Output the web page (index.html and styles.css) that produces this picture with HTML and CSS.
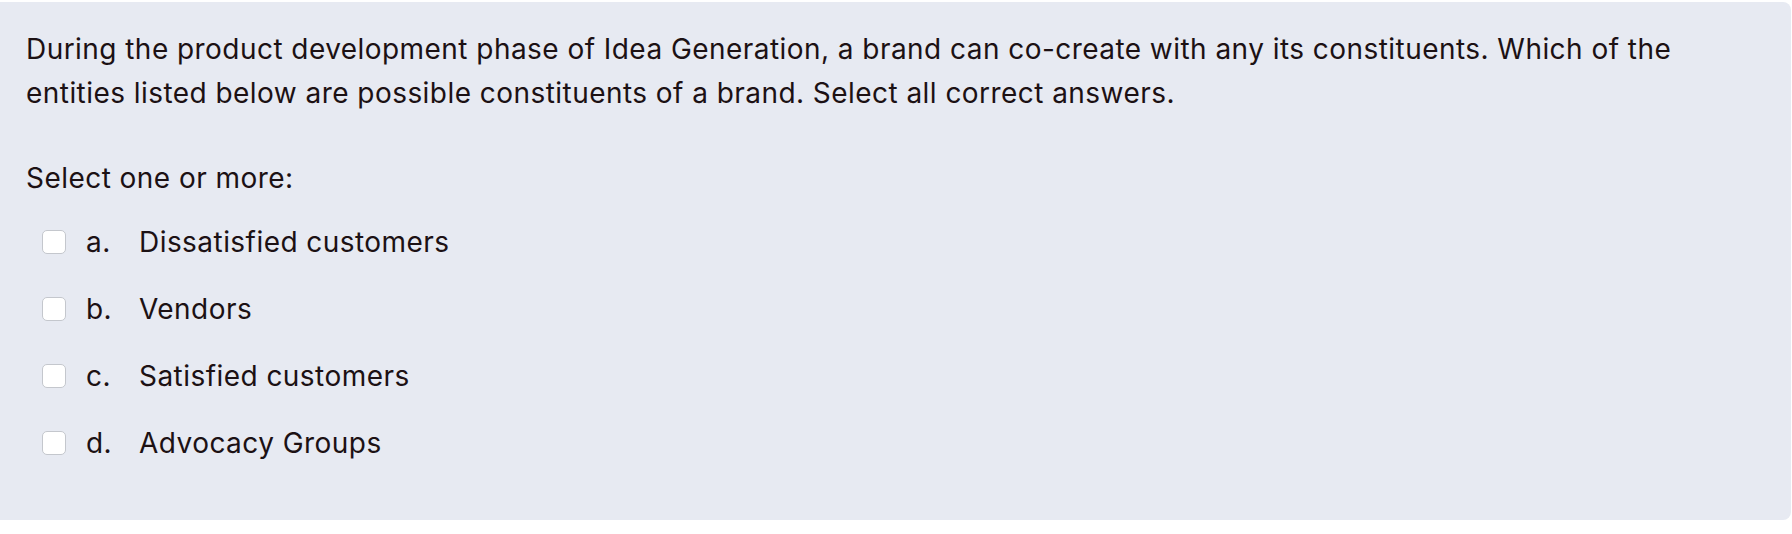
FILE: index.html
```html
<!DOCTYPE html>
<html lang="en">
<head>
<meta charset="utf-8">
<title>Question</title>
<link rel="stylesheet" href="styles.css">
</head>
<body>
<div class="formulation">
  <div class="qtext">During the product development phase of Idea Generation, a brand can co-create with any its constituents. Which of the entities listed below are possible constituents of a brand. Select all correct answers.</div>
  <div class="ablock">
    <div class="prompt">Select one or more:</div>
    <div class="answer">
      <div class="option"><span class="box"></span><span class="num">a.</span><span class="label">Dissatisfied customers</span></div>
      <div class="option"><span class="box"></span><span class="num">b.</span><span class="label">Vendors</span></div>
      <div class="option"><span class="box"></span><span class="num">c.</span><span class="label">Satisfied customers</span></div>
      <div class="option"><span class="box"></span><span class="num">d.</span><span class="label">Advocacy Groups</span></div>
    </div>
  </div>
</div>
</body>
</html>
```
FILE: styles.css
```css
html, body {
  margin: 0;
  padding: 0;
  background: #ffffff;
}
body {
  padding-top: 2px;
  font-family: Inter, "Noto Sans", sans-serif;
  font-size: 28px;
  letter-spacing: 0.45px;
  line-height: 42px;
  color: #1c1114;
}
.formulation {
  box-sizing: border-box;
  width: 1791px;
  height: 518px;
  background: #e7eaf2;
  border-radius: 0 8px 8px 0;
  padding: 25px 26px 0 26px;
}
.qtext {
  width: 1700px;
  line-height: 44px;
}
.ablock {
  margin-top: 42px;
}
.prompt {
  margin-bottom: 22px;
}
.answer {
  display: flex;
  flex-direction: column;
  gap: 25px;
  padding-left: 16px;
}
.option {
  display: flex;
  align-items: center;
  height: 42px;
}
.box {
  box-sizing: border-box;
  width: 24px;
  height: 24px;
  background: #ffffff;
  border: 1px solid #c4c7cd;
  border-radius: 5px;
  margin-right: 20px;
  flex: none;
}
.num {
  width: 53px;
  flex: none;
}
```
